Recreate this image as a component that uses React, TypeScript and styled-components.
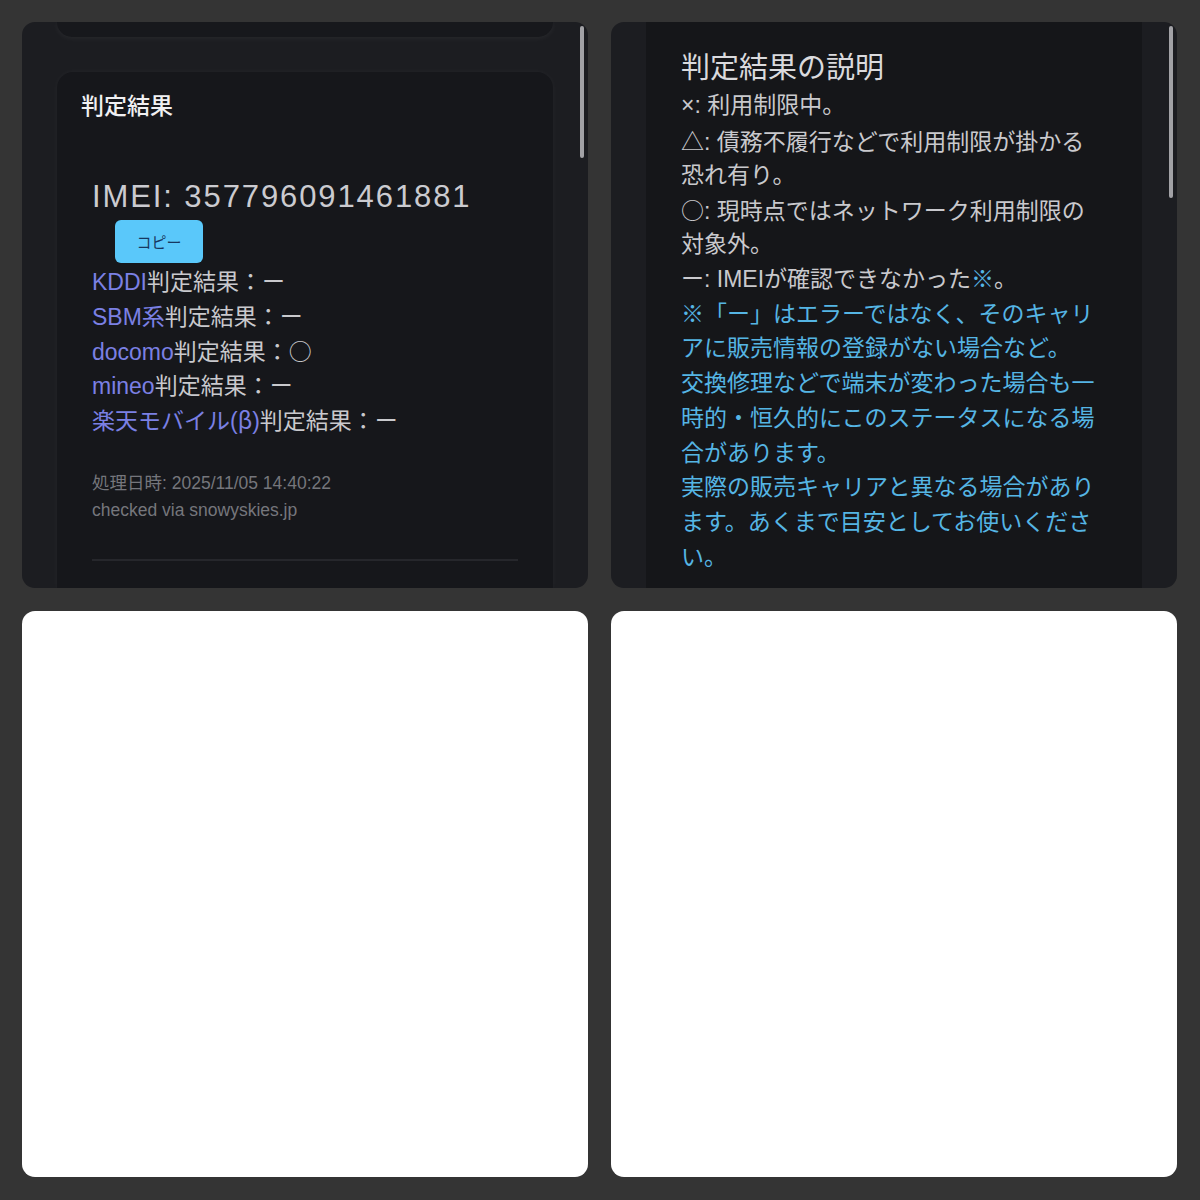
import type { ReactNode } from "react";
import styled, { createGlobalStyle } from "styled-components";

const GlobalStyle = createGlobalStyle`
  html, body {
    margin: 0;
    padding: 0;
    background: #343434;
  }
  body {
    font-family: "Liberation Sans", "Noto Sans CJK JP", sans-serif;
  }
`;

const Grid = styled.div`
  display: grid;
  grid-template-columns: 566px 566px;
  grid-template-rows: 566px 566px;
  gap: 23px;
  padding: 22px;
  width: 1200px;
  height: 1200px;
  box-sizing: border-box;
`;

interface TileProps {
  light?: boolean;
}

const Tile = styled.div<TileProps>`
  position: relative;
  overflow: hidden;
  border-radius: 13px;
  background: ${(p) => (p.light ? "#ffffff" : "#1c1d21")};
`;

interface ScrollProps {
  length: number;
}

const Scrollbar = styled.div<ScrollProps>`
  position: absolute;
  top: 4px;
  right: 4px;
  width: 4px;
  height: ${(p) => p.length}px;
  border-radius: 2px;
  background: #a2a2a6;
`;

/* left tile: stacked result cards */
const CardColumn = styled.div`
  display: flex;
  flex-direction: column;
  padding: 0 35px;
  height: 100%;
`;

const PrevCard = styled.div`
  flex: 0 0 15px;
  background: #17181c;
  border-radius: 0 0 16px 16px;
  box-shadow: 0 1px 6px rgba(255, 255, 255, 0.06);
`;

const Card = styled.div`
  margin-top: 35px;
  flex: 1;
  background: #16171b;
  border-radius: 16px 16px 0 0;
  box-shadow: 0 0 6px rgba(255, 255, 255, 0.04);
  padding: 17px 35px 0 24px;
`;

const CardTitle = styled.div`
  font-size: 23px;
  line-height: 35px;
  height: 35px;
  font-weight: 500;
  color: #f0f0f2;
`;

const ResultBody = styled.div`
  margin-top: 53px;
  padding-left: 11px;
`;

const Imei = styled.div`
  font-size: 31px;
  line-height: 40px;
  height: 40px;
  letter-spacing: 1.9px;
  color: #cbcbd0;
`;

const CopyButton = styled.button`
  display: block;
  margin: 3px 0 0 23px;
  width: 88px;
  height: 43px;
  border: none;
  border-radius: 6px;
  background: #5ac8fa;
  color: #173760;
  font-family: "Noto Sans CJK JP", sans-serif;
  font-size: 15px;
  padding: 0;
`;

const ResultLine = styled.div`
  font-size: 23px;
  line-height: 34.8px;
  height: 34.8px;
  color: #c9c9cd;
  white-space: nowrap;
`;

const Carrier = styled.span`
  color: #7b80e4;
`;

const Sym = styled.span`
  font-family: "Noto Sans CJK JP", sans-serif;
`;

const Footer = styled.div`
  margin-top: 33px;
  font-size: 17.5px;
  line-height: 27px;
  color: #75767c;
`;

const Divider = styled.div`
  margin-top: 35px;
  height: 2px;
  background: #26272c;
`;

/* right tile: legend */
const Panel = styled.div`
  margin: 0 35px;
  height: 100%;
  background: #151619;
  padding: 27px 35px 0;
  box-sizing: border-box;
`;

const PanelTitle = styled.div`
  font-size: 29px;
  line-height: 38px;
  height: 38px;
  color: #dadadd;
  margin-bottom: 1px;
`;

interface NoteProps {
  accent?: boolean;
}

const NoteLine = styled.div<NoteProps>`
  font-size: 23px;
  line-height: 34.75px;
  height: 34.75px;
  white-space: nowrap;
  color: ${(p) => (p.accent ? "#55b5e4" : "#c9c9cd")};
`;

const Accent = styled.span`
  color: #55b5e4;
`;

const carriers: { key: string; name: ReactNode; mark: string }[] = [
  { key: "kddi", name: "KDDI", mark: "ー" },
  { key: "sbm", name: "SBM系", mark: "ー" },
  { key: "docomo", name: "docomo", mark: "○" },
  { key: "mineo", name: "mineo", mark: "ー" },
  {
    key: "rakuten",
    name: (
      <>
        楽天モバイル(<Sym>β</Sym>)
      </>
    ),
    mark: "ー",
  },
];

const accentNotes = [
  "※「ー」はエラーではなく、そのキャリ",
  "アに販売情報の登録がない場合など。",
  "交換修理などで端末が変わった場合も一",
  "時的・恒久的にこのステータスになる場",
  "合があります。",
  "実際の販売キャリアと異なる場合があり",
  "ます。あくまで目安としてお使いくださ",
  "い。",
];

export default function App() {
  return (
    <>
      <GlobalStyle />
      <Grid>
        <Tile>
          <CardColumn>
            <PrevCard />
            <Card>
              <CardTitle>判定結果</CardTitle>
              <ResultBody>
                <Imei>IMEI: 357796091461881</Imei>
                <CopyButton>コピー</CopyButton>
                {carriers.map((c) => (
                  <ResultLine key={c.key}>
                    <Carrier>{c.name}</Carrier>判定結果：<Sym>{c.mark}</Sym>
                  </ResultLine>
                ))}
                <Footer>
                  処理日時: 2025/11/05 14:40:22
                  <br />
                  checked via snowyskies.jp
                </Footer>
                <Divider />
              </ResultBody>
            </Card>
          </CardColumn>
          <Scrollbar length={132} />
        </Tile>

        <Tile>
          <Panel>
            <PanelTitle>判定結果の説明</PanelTitle>
            <NoteLine>×: 利用制限中。</NoteLine>
            <NoteLine>
              <Sym>△</Sym>: 債務不履行などで利用制限が掛かる
            </NoteLine>
            <NoteLine>恐れ有り。</NoteLine>
            <NoteLine>
              <Sym>○</Sym>: 現時点ではネットワーク利用制限の
            </NoteLine>
            <NoteLine>対象外。</NoteLine>
            <NoteLine>
              ー: IMEIが確認できなかった<Accent>※</Accent>。
            </NoteLine>
            {accentNotes.map((line) => (
              <NoteLine accent key={line}>
                {line}
              </NoteLine>
            ))}
          </Panel>
          <Scrollbar length={172} />
        </Tile>

        <Tile light />
        <Tile light />
      </Grid>
    </>
  );
}
